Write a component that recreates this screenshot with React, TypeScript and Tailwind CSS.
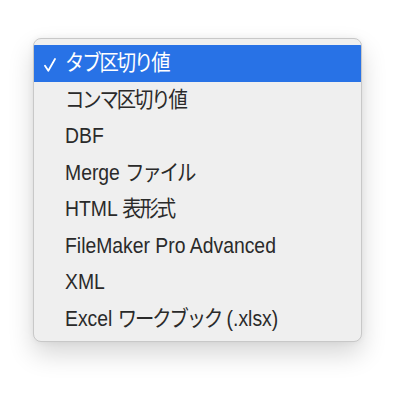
import React from "react";

type Part = { t: string; jp?: boolean };

const items: Part[][] = [
  [{ t: "タブ区切り値", jp: true }],
  [{ t: "コンマ区切り値", jp: true }],
  [{ t: "DBF" }],
  [{ t: "Merge " }, { t: "ファイル", jp: true }],
  [{ t: "HTML " }, { t: "表形式", jp: true }],
  [{ t: "FileMaker Pro Advanced" }],
  [{ t: "XML" }],
  [{ t: "Excel " }, { t: "ワークブック", jp: true }, { t: " (.xlsx)" }],
];

export default function App() {
  return (
    <div
      className="w-[396px] h-[396px] bg-white relative"
      style={{ fontFamily: '"Liberation Sans", "Noto Sans CJK JP", sans-serif' }}
    >
      <div className="absolute left-[33px] top-[38px] w-[329px] h-[304px] rounded-[8px] bg-[#efefef] border border-[#c8c8c8] shadow-[0_12px_26px_rgba(0,0,0,0.16),0_0_6px_rgba(0,0,0,0.06)] pt-[6px] overflow-hidden">
        {items.map((parts, i) => (
          <div
            key={i}
            className={
              "h-[36.5px] flex items-center " +
              (i === 0 ? "bg-[#2872e6] text-white" : "text-[#2a2a2a]")
            }
          >
            <div className="w-[31px] flex justify-end pr-[9px]">
              {i === 0 ? (
                <svg width="12" height="14" viewBox="0 0 12 14" className="mt-[3px]">
                  <path d="M1 7.8 L4.3 12.8 L11 1" fill="none" stroke="white" strokeWidth="1.8" strokeLinecap="round" strokeLinejoin="round" />
                </svg>
              ) : null}
            </div>
            <span className="text-[22px] leading-none whitespace-pre origin-left scale-x-[0.88] inline-block">
              {parts.map((p, j) => (
                <span key={j} className={p.jp ? "tracking-[-2.4px]" : ""}>
                  {p.t}
                </span>
              ))}
            </span>
          </div>
        ))}
      </div>
    </div>
  );
}
